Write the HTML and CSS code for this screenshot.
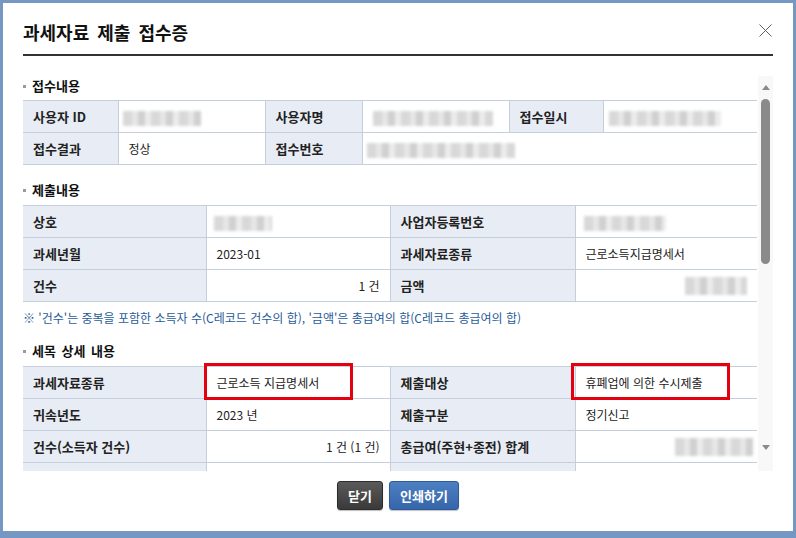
FILE: index.html
```html
<!DOCTYPE html>
<html lang="ko">
<head>
<meta charset="utf-8">
<title>과세자료 제출 접수증</title>
<link rel="stylesheet" href="styles.css">
</head>
<body>
<div class="frame">
  <div class="header">
    <h1 class="title">과세자료 제출 접수증</h1>
    <span class="close" aria-label="닫기"><svg width="13" height="13" viewBox="0 0 13 13"><path d="M0.5 0.5 L12.5 12.5 M12.5 0.5 L0.5 12.5" stroke="#5b6070" stroke-width="1" fill="none"/></svg></span>
  </div>
  <div class="body">
    <div class="content">
      <h2 class="sec">접수내용</h2>
      <table class="grid t6">
        <colgroup><col class="w95"><col class="w147"><col class="w97"><col class="w147"><col class="w94"><col class="w154"></colgroup>
        <tr>
          <th>사용자 ID</th><td><span class="blur b-id"></span></td>
          <th>사용자명</th><td><span class="blur b-name"></span></td>
          <th>접수일시</th><td><span class="blur b-date"></span></td>
        </tr>
        <tr>
          <th>접수결과</th><td>정상</td>
          <th>접수번호</th><td colspan="3"><span class="blur b-no"></span></td>
        </tr>
      </table>

      <h2 class="sec">제출내용</h2>
      <table class="grid t4">
        <colgroup><col class="w183"><col class="w184"><col class="w185"><col class="w182"></colgroup>
        <tr>
          <th>상호</th><td><span class="blur b-co"></span></td>
          <th>사업자등록번호</th><td><span class="blur b-biz"></span></td>
        </tr>
        <tr>
          <th>과세년월</th><td>2023-01</td>
          <th>과세자료종류</th><td>근로소득지급명세서</td>
        </tr>
        <tr>
          <th>건수</th><td class="num">1 건</td>
          <th>금액</th><td class="num"><span class="blur b-amt"></span></td>
        </tr>
      </table>
      <p class="note">※ '건수'는 중복을 포함한 소득자 수(C레코드 건수의 합), '금액'은 총급여의 합(C레코드 총급여의 합)</p>

      <h2 class="sec">세목 상세 내용</h2>
      <table class="grid t4">
        <colgroup><col class="w183"><col class="w184"><col class="w185"><col class="w182"></colgroup>
        <tr>
          <th>과세자료종류</th><td class="mark">근로소득 지급명세서<span class="hl hl1"></span></td>
          <th>제출대상</th><td class="mark">휴폐업에 의한 수시제출<span class="hl hl2"></span></td>
        </tr>
        <tr>
          <th>귀속년도</th><td>2023 년</td>
          <th>제출구분</th><td>정기신고</td>
        </tr>
        <tr>
          <th>건수(소득자 건수)</th><td class="num">1 건 (1 건)</td>
          <th>총급여(주현+종전) 합계</th><td class="num"><span class="blur b-tot"></span></td>
        </tr>
        <tr>
          <th></th><td></td>
          <th></th><td></td>
        </tr>
      </table>
    </div>
    <div class="sbar">
      <span class="arr-up"></span>
      <span class="thumb"></span>
      <span class="arr-down"></span>
    </div>
  </div>
  <div class="footer">
    <button class="btn btn-dark">닫기</button>
    <button class="btn btn-blue">인쇄하기</button>
  </div>
</div>
</body>
</html>
```
FILE: styles.css
```css
* { box-sizing: border-box; margin: 0; padding: 0; }
html, body { width: 796px; height: 538px; overflow: hidden; }
body {
  font-family: "Noto Sans CJK KR", "Noto Sans", sans-serif;
  background: #fff;
  color: #222;
}
.frame {
  width: 796px;
  height: 538px;
  border: 3px solid #7597c2;
  border-bottom-width: 7px;
  padding: 0 20px;
  display: flex;
  flex-direction: column;
  background: #fff;
}
.header {
  height: 53px;
  display: flex;
  align-items: flex-start;
  justify-content: space-between;
  padding-top: 18px;
  border-bottom: 2px solid #333;
}
.title {
  font-size: 18px;
  line-height: 22px;
  font-weight: 700;
  color: #111;
  word-spacing: 3px;
}
.close {
  display: block;
  width: 13px;
  height: 13px;
  margin-top: 3px;
  margin-right: 1px;
}
.close svg { display: block; }

.body {
  display: flex;
  height: 395px;
  margin-top: 20px;
}
.content {
  flex: 1;
  overflow: hidden;
}
.sbar {
  width: 15px;
  background: #f8f8f8;
  display: flex;
  flex-direction: column;
  align-items: center;
}
.arr-up {
  margin-top: 9px;
  width: 0; height: 0;
  border-left: 4px solid transparent;
  border-right: 4px solid transparent;
  border-bottom: 5px solid #8a8a8a;
}
.thumb {
  margin-top: 9px;
  width: 9px;
  height: 165px;
  border-radius: 5px;
  background: #8a8a8a;
}
.arr-down {
  margin-top: auto;
  margin-bottom: 21px;
  width: 0; height: 0;
  border-left: 4px solid transparent;
  border-right: 4px solid transparent;
  border-top: 5px solid #8a8a8a;
}

.sec {
  display: flex;
  align-items: center;
  font-size: 13px;
  line-height: 20px;
  font-weight: 700;
  color: #111;
  margin: 15px 0 5px;
  word-spacing: 2px;
}
.sec:first-child { margin-top: 0; margin-bottom: 4px; }
.sec::before {
  content: "";
  width: 3px;
  height: 3px;
  background: #9a9a9a;
  margin-right: 6px;
}

.grid {
  width: 734px;
  border-collapse: collapse;
  table-layout: fixed;
}
.grid th, .grid td {
  height: 32px;
  border: 1px solid #c5cfdc;
  padding: 0 10px;
  text-align: left;
  vertical-align: middle;
  white-space: nowrap;
}
.grid tr > :first-child { border-left: 0; }
.grid tr > :last-child { border-right: 0; }
.grid th {
  background: #e8edf5;
  font-size: 13px;
  font-weight: 700;
  color: #222;
}
.grid td {
  background: #fff;
  font-size: 12px;
  color: #222;
}
.grid td.num { text-align: right; }

.w95 { width: 95px; }
.w147 { width: 147px; }
.w97 { width: 97px; }
.w94 { width: 94px; }
.w154 { width: 154px; }
.w183 { width: 183px; }
.w184 { width: 184px; }
.w185 { width: 185px; }
.w182 { width: 182px; }

.note {
  margin-top: 8px;
  font-size: 12px;
  line-height: 16px;
  color: #1f5c99;
}

.mark { position: relative; }
.hl {
  position: absolute;
  top: -4px;
  height: 37px;
  border: 3px solid #e5000f;
}
.hl1 { left: -3px; width: 149px; }
.hl2 { left: -5px; width: 159px; }

.blur {
  display: inline-block;
  vertical-align: middle;
  height: 15px;
  background: repeating-linear-gradient(90deg, #d8d8d8 0 9px, #e6e6e6 9px 15px, #d0d0d0 15px 22px, #ececec 22px 28px);
  filter: blur(1.5px);
}
.b-id { width: 78px; margin-left: -6px; }
.b-name { width: 120px; }
.b-date { width: 112px; margin-left: -5px; }
.b-no { width: 148px; margin-left: -6px; }
.b-co { width: 58px; margin-left: -3px; }
.b-biz { width: 82px; margin-left: -2px; }
.b-amt { width: 62px; height: 18px; }
.b-tot { width: 78px; height: 18px; margin-right: -6px; }

.footer {
  display: flex;
  justify-content: center;
  gap: 6px;
  margin-top: 10px;
}
.btn {
  height: 29px;
  padding: 0 10px;
  border-radius: 3px;
  border: 1px solid;
  font-family: "Noto Sans CJK KR", "Noto Sans", sans-serif;
  font-size: 13px;
  font-weight: 700;
  color: #fff;
  box-shadow: 0 1px 1px rgba(0,0,0,0.25);
}
.btn-dark {
  background: linear-gradient(#5a5a5a, #3a3a3a);
  border-color: #2c2c2c;
}
.btn-blue {
  background: linear-gradient(#4d7fc3, #3566a9);
  border-color: #2e5b97;
}
```
